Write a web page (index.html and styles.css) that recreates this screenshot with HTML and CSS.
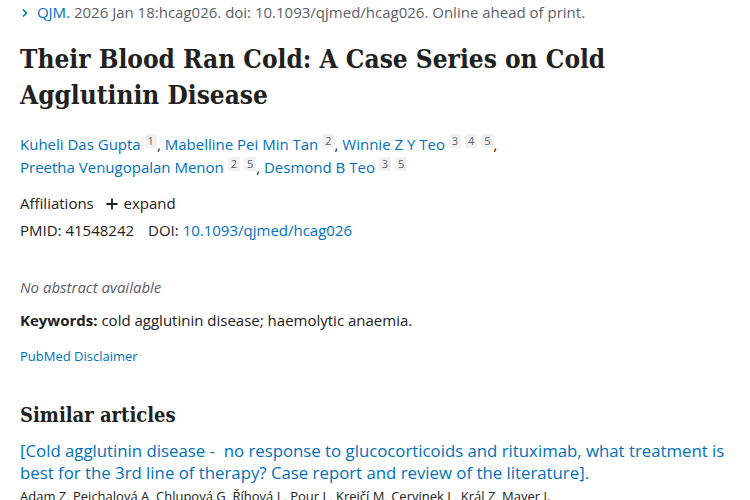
FILE: index.html
```html
<!DOCTYPE html>
<html lang="en">
<head>
    <meta charset="UTF-8">
    <title>Their Blood Ran Cold - PubMed</title>
    <link rel="stylesheet" href="styles.css">
</head>
<body>
    <div class="article">
        <div class="citation">
            <svg class="chevron" width="10" height="10" viewBox="0 0 10 10"><path d="M3 1.5 L6.5 5 L3 8.5" fill="none" stroke="#0071bc" stroke-width="1.6"/></svg>
            <a href="#" class="link">QJM.</a> 2026 Jan 18:hcag026. doi: 10.1093/qjmed/hcag026. Online ahead of print.
        </div>

        <h1 class="title">Their Blood Ran Cold: A Case Series on Cold Agglutinin Disease</h1>

        <div class="authors">
            <span class="author"><a href="#" class="link">Kuheli Das Gupta</a> <span class="aff">1</span>,</span>
            <span class="author"><a href="#" class="link">Mabelline Pei Min Tan</a> <span class="aff">2</span>,</span>
            <span class="author"><a href="#" class="link">Winnie Z Y Teo</a> <span class="aff">3</span> <span class="aff">4</span> <span class="aff">5</span>,</span>
            <span class="author"><a href="#" class="link">Preetha Venugopalan Menon</a> <span class="aff">2</span> <span class="aff">5</span>,</span>
            <span class="author"><a href="#" class="link">Desmond B Teo</a> <span class="aff">3</span> <span class="aff">5</span></span>
        </div>

        <div class="affiliations">
            Affiliations
            <span class="expand">
                <svg class="plus" width="12" height="12" viewBox="0 0 12 12"><path d="M6 0.5 V11.5 M0.5 6 H11.5" stroke="#212121" stroke-width="1.8"/></svg>
                expand
            </span>
        </div>
        <div class="ids">
            <span>PMID: 41548242</span>
            <span>DOI: <a href="#" class="link">10.1093/qjmed/hcag026</a></span>
        </div>

        <p class="no-abstract">No abstract available</p>

        <p class="keywords"><strong>Keywords:</strong> cold agglutinin disease; haemolytic anaemia.</p>

        <a href="#" class="link disclaimer">PubMed Disclaimer</a>

        <h2 class="section-title">Similar articles</h2>

        <div class="similar">
            <a href="#" class="link similar-title">[Cold agglutinin disease - &nbsp;no response to glucocorticoids and rituximab, what treatment is best for the 3rd line of therapy? Case report and review of the literature].</a>
            <div class="similar-authors">Adam Z, Pejchalová A, Chlupová G, Říhová L, Pour L, Krejčí M, Cervinek L, Král Z, Mayer J.</div>
        </div>
    </div>
</body>
</html>
```

FILE: styles.css
```css
* {
    margin: 0;
    padding: 0;
    box-sizing: border-box;
}

body {
    font-family: 'Open Sans', 'Noto Sans', sans-serif;
    font-size: 15px;
    color: #212121;
    background: white;
    overflow: hidden;
}

.article {
    padding: 2px 12px 0 20px;
}

.link {
    color: #0071bc;
    text-decoration: none;
}

.citation {
    color: #5b616b;
    font-size: 15px;
    line-height: 20px;
}

.chevron {
    margin-right: 3px;
}

.title {
    font-family: 'DejaVu Serif Condensed', 'DejaVu Serif', serif;
    font-size: 26px;
    font-weight: bold;
    line-height: 36px;
    margin-top: 19px;
    color: #212121;
}

.authors {
    margin-top: 20px;
    line-height: 23px;
}

.author {
    white-space: nowrap;
}

.aff {
    display: inline-block;
    background: #f1f1f1;
    color: #5b616b;
    font-size: 11px;
    line-height: 14px;
    padding: 0 3px;
    border-radius: 2px;
    vertical-align: 5px;
}

.affiliations {
    margin-top: 13px;
    line-height: 22px;
}

.expand {
    margin-left: 8px;
}

.plus {
    margin-right: 2px;
    vertical-align: -1px;
}

.ids {
    display: flex;
    gap: 14px;
    line-height: 22px;
    margin-top: 5px;
}

.no-abstract {
    font-style: italic;
    color: #5b616b;
    margin-top: 35px;
    line-height: 22px;
}

.keywords {
    margin-top: 11px;
    line-height: 22px;
}

.disclaimer {
    display: block;
    font-size: 13px;
    margin-top: 15px;
    line-height: 20px;
}

.section-title {
    font-family: 'DejaVu Serif Condensed', 'DejaVu Serif', serif;
    font-size: 20px;
    font-weight: bold;
    line-height: 30px;
    margin-top: 34px;
}

.similar {
    margin-top: 10px;
}

.similar-title {
    display: block;
    font-size: 16.8px;
    line-height: 22px;
}

.similar-authors {
    font-size: 13px;
    line-height: 20px;
    margin-top: 2px;
}
```
